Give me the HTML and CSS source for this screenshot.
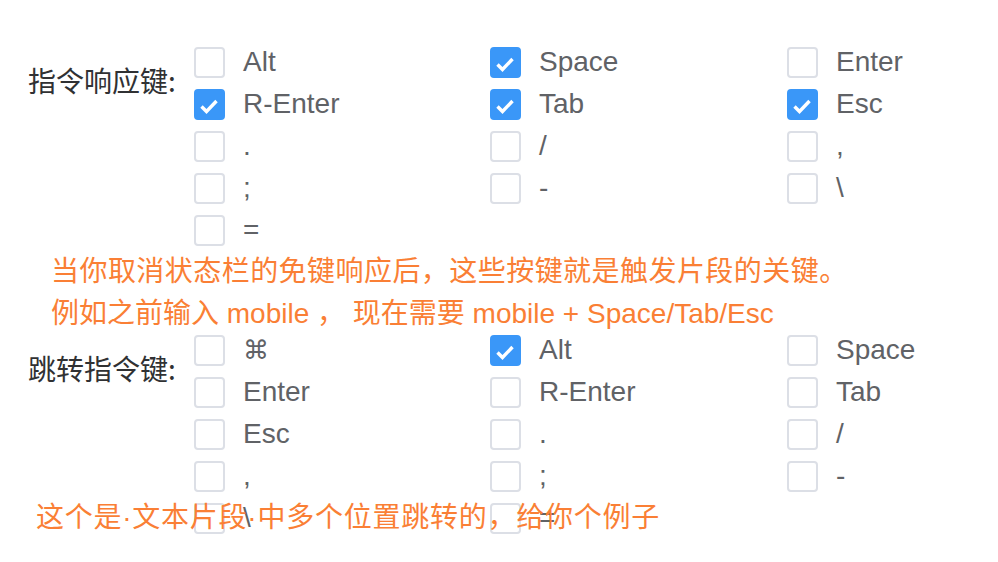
FILE: index.html
```html
<!DOCTYPE html>
<html lang="zh-CN">

<head>
    <meta charset="UTF-8">
    <meta name="viewport" content="width=device-width, initial-scale=1.0">
    <title>快捷键设置</title>
    <link rel="stylesheet" href="styles.css">
</head>

<body>
    <div class="page">
        <div class="form_item">
            <div class="form_label">指令响应键:</div>
            <div class="checkbox_group">
                <label class="checkbox"><span class="checkbox_input"></span><span class="checkbox_label">Alt</span></label>
                <label class="checkbox checked"><span class="checkbox_input"><svg viewBox="0 0 31 31"><polyline points="7.5,17.5 12.5,22.5 22.5,12"/></svg></span><span class="checkbox_label">Space</span></label>
                <label class="checkbox"><span class="checkbox_input"></span><span class="checkbox_label">Enter</span></label>
                <label class="checkbox checked"><span class="checkbox_input"><svg viewBox="0 0 31 31"><polyline points="7.5,17.5 12.5,22.5 22.5,12"/></svg></span><span class="checkbox_label">R-Enter</span></label>
                <label class="checkbox checked"><span class="checkbox_input"><svg viewBox="0 0 31 31"><polyline points="7.5,17.5 12.5,22.5 22.5,12"/></svg></span><span class="checkbox_label">Tab</span></label>
                <label class="checkbox checked"><span class="checkbox_input"><svg viewBox="0 0 31 31"><polyline points="7.5,17.5 12.5,22.5 22.5,12"/></svg></span><span class="checkbox_label">Esc</span></label>
                <label class="checkbox"><span class="checkbox_input"></span><span class="checkbox_label">.</span></label>
                <label class="checkbox"><span class="checkbox_input"></span><span class="checkbox_label">/</span></label>
                <label class="checkbox"><span class="checkbox_input"></span><span class="checkbox_label">,</span></label>
                <label class="checkbox"><span class="checkbox_input"></span><span class="checkbox_label">;</span></label>
                <label class="checkbox"><span class="checkbox_input"></span><span class="checkbox_label">-</span></label>
                <label class="checkbox"><span class="checkbox_input"></span><span class="checkbox_label">\</span></label>
                <label class="checkbox"><span class="checkbox_input"></span><span class="checkbox_label">=</span></label>
            </div>
        </div>

        <p class="note"><span class="wide">当你取消状态栏的免键响应后，这些按键就是触发片段的关键。</span><br>例如之前输入 mobile ， 现在需要 mobile + Space/Tab/Esc</p>

        <div class="form_item second">
            <div class="form_label">跳转指令键:</div>
            <div class="checkbox_group">
                <label class="checkbox"><span class="checkbox_input"></span><span class="checkbox_label cmd">⌘</span></label>
                <label class="checkbox checked"><span class="checkbox_input"><svg viewBox="0 0 31 31"><polyline points="7.5,17.5 12.5,22.5 22.5,12"/></svg></span><span class="checkbox_label">Alt</span></label>
                <label class="checkbox"><span class="checkbox_input"></span><span class="checkbox_label">Space</span></label>
                <label class="checkbox"><span class="checkbox_input"></span><span class="checkbox_label">Enter</span></label>
                <label class="checkbox"><span class="checkbox_input"></span><span class="checkbox_label">R-Enter</span></label>
                <label class="checkbox"><span class="checkbox_input"></span><span class="checkbox_label">Tab</span></label>
                <label class="checkbox"><span class="checkbox_input"></span><span class="checkbox_label">Esc</span></label>
                <label class="checkbox"><span class="checkbox_input"></span><span class="checkbox_label">.</span></label>
                <label class="checkbox"><span class="checkbox_input"></span><span class="checkbox_label">/</span></label>
                <label class="checkbox"><span class="checkbox_input"></span><span class="checkbox_label">,</span></label>
                <label class="checkbox"><span class="checkbox_input"></span><span class="checkbox_label">;</span></label>
                <label class="checkbox"><span class="checkbox_input"></span><span class="checkbox_label">-</span></label>
                <label class="checkbox"><span class="checkbox_input"></span><span class="checkbox_label">\</span></label>
                <label class="checkbox"><span class="checkbox_input"></span><span class="checkbox_label">=</span></label>
            </div>
        </div>

        <p class="note tip">这个是·文本片段·中多个位置跳转的，给你个例子</p>
    </div>
</body>

</html>
```

FILE: styles.css
```css
* {
    margin: 0;
    padding: 0;
    box-sizing: border-box;
}

body {
    background-color: #fff;
    font-family: "Liberation Sans", "Noto Sans CJK SC", sans-serif;
}

.page {
    position: relative;
    padding: 41px 0 0 28px;
}

.form_item {
    display: flex;
}

.form_item.second {
    margin-top: -6px;
}

.form_label {
    width: 166px;
    padding-top: 18px;
    font-family: "Noto Sans CJK SC", sans-serif;
    font-size: 28px;
    line-height: 42px;
    color: #303133;
}

.checkbox_group {
    display: grid;
    grid-template-columns: 296px 297px 200px;
    grid-auto-rows: 42px;
}

.checkbox {
    display: flex;
    align-items: center;
    cursor: pointer;
}

.checkbox_input {
    display: flex;
    width: 31px;
    height: 31px;
    border: 2px solid #dcdfe6;
    border-radius: 4px;
    background-color: #fff;
}

.checkbox_input svg {
    flex: none;
    width: 31px;
    height: 31px;
    margin: -2px;
}

.checkbox_input polyline {
    fill: none;
    stroke: #fff;
    stroke-width: 3.4;
}

.checked .checkbox_input {
    border-color: #3a97f8;
    background-color: #3a97f8;
}

.checkbox_label {
    padding-left: 18px;
    font-size: 28px;
    line-height: 42px;
    color: #606266;
}

.checkbox_label.cmd {
    font-family: "DejaVu Sans", sans-serif;
    font-size: 26px;
}

.note {
    margin-left: 23px;
    font-family: "Liberation Sans", "Noto Sans CJK SC", sans-serif;
    font-size: 28px;
    line-height: 42px;
    color: #fa7f35;
}

.note .wide {
    letter-spacing: 0.45px;
}

.tip {
    position: absolute;
    left: 36px;
    top: 497px;
    margin-left: 0;
    letter-spacing: 0.75px;
}
```
